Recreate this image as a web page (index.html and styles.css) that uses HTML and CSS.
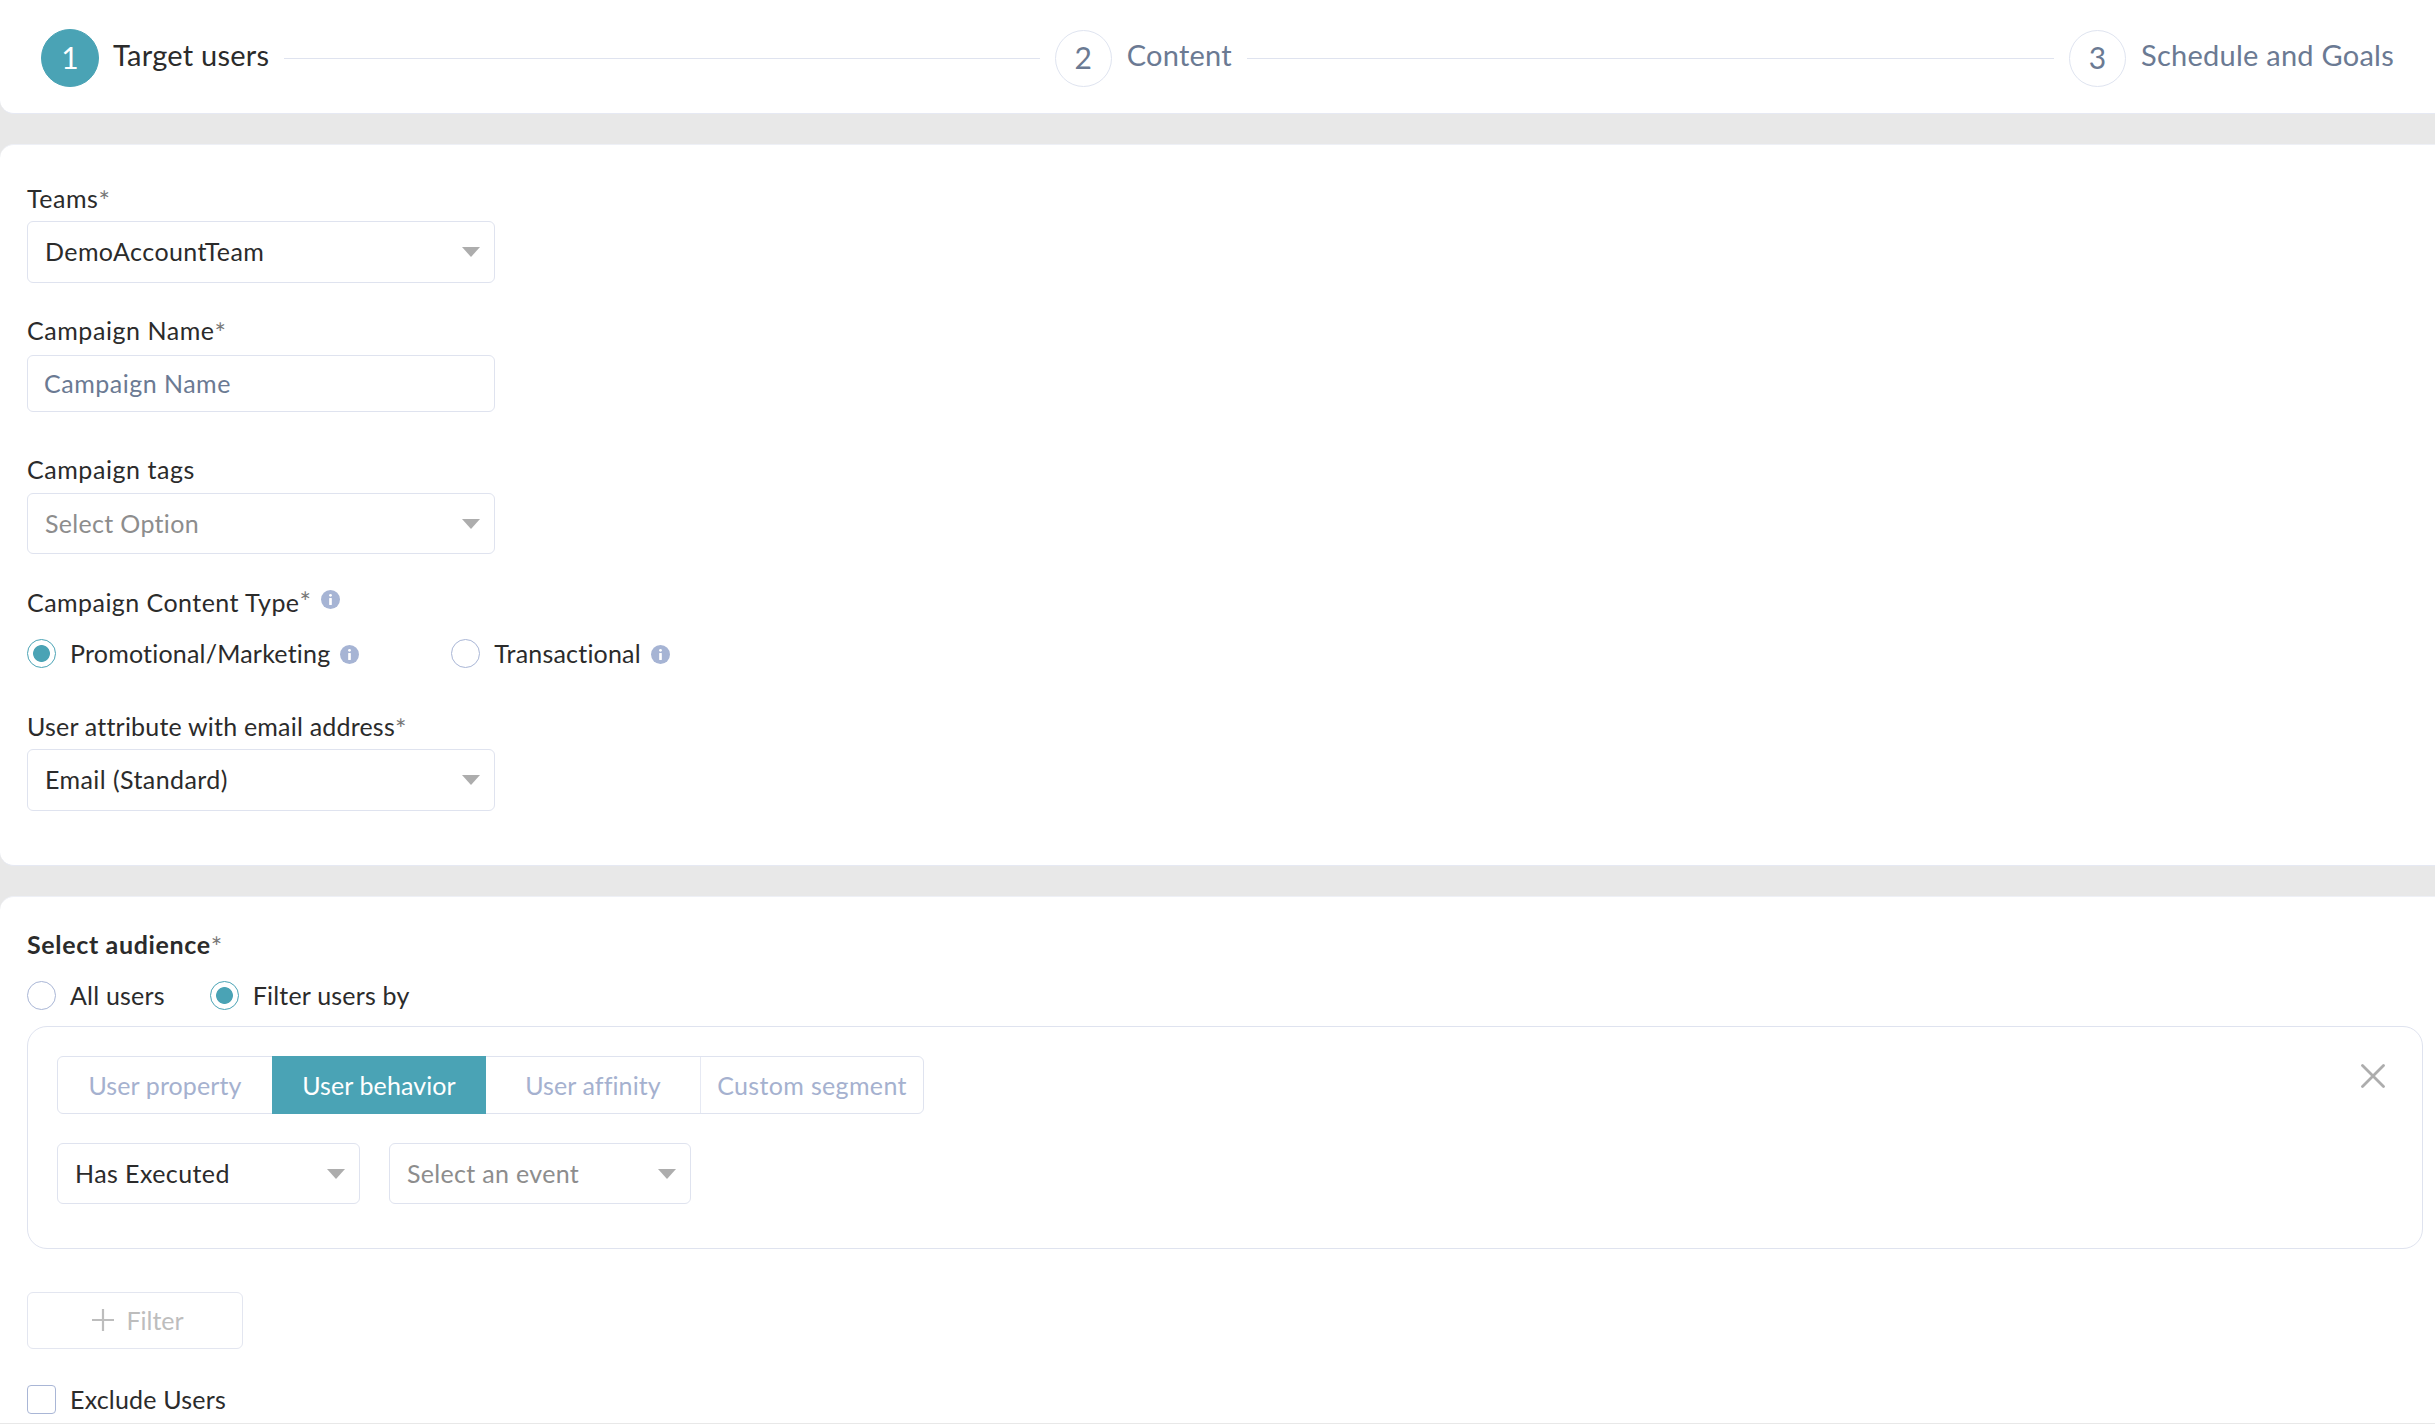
FILE: index.html
```html
<!DOCTYPE html>
<html lang="en">
<head>
<meta charset="utf-8">
<title>Campaign</title>
<link rel="stylesheet" href="styles.css">
</head>
<body>
<header class="card stepper">
  <span class="step-num step-num-active">1</span>
  <span class="step-label step-label-active">Target users</span>
  <span class="step-line step-line-a"></span>
  <span class="step-num">2</span>
  <span class="step-label">Content</span>
  <span class="step-line step-line-b"></span>
  <span class="step-num">3</span>
  <span class="step-label">Schedule and Goals</span>
</header>

<section class="card details">
  <label class="label label-teams">Teams<span class="req">*</span></label>
  <div class="select select-wide"><span class="value">DemoAccountTeam</span><i class="caret"></i></div>

  <label class="label label-name">Campaign Name<span class="req">*</span></label>
  <div class="input"><span class="placeholder">Campaign Name</span></div>

  <label class="label label-tags">Campaign tags</label>
  <div class="select select-wide select-short"><span class="muted">Select Option</span><i class="caret"></i></div>

  <div class="label label-type">Campaign Content Type<span class="req">*</span>
    <svg class="info info-up" viewBox="0 0 20 20"><circle cx="10" cy="10" r="10" fill="#a6b4d4"/><circle cx="10" cy="5.6" r="1.5" fill="#fff"/><rect x="8.6" y="8.4" width="2.8" height="7.4" rx=".6" fill="#fff"/></svg>
  </div>
  <div class="radio-row type-row">
    <span class="radio radio-on"></span><span class="radio-text">Promotional/Marketing</span>
    <svg class="info" viewBox="0 0 20 20"><circle cx="10" cy="10" r="10" fill="#a6b4d4"/><circle cx="10" cy="5.6" r="1.5" fill="#fff"/><rect x="8.6" y="8.4" width="2.8" height="7.4" rx=".6" fill="#fff"/></svg>
    <span class="radio radio-second"></span><span class="radio-text">Transactional</span>
    <svg class="info" viewBox="0 0 20 20"><circle cx="10" cy="10" r="10" fill="#a6b4d4"/><circle cx="10" cy="5.6" r="1.5" fill="#fff"/><rect x="8.6" y="8.4" width="2.8" height="7.4" rx=".6" fill="#fff"/></svg>
  </div>

  <label class="label label-attr">User attribute with email address<span class="req">*</span></label>
  <div class="select select-wide"><span class="value">Email (Standard)</span><i class="caret"></i></div>
</section>

<section class="card audience">
  <div class="label label-audience"><b class="strong">Select audience</b><span class="req">*</span></div>
  <div class="radio-row audience-row">
    <span class="radio"></span><span class="radio-text">All users</span>
    <span class="radio radio-on radio-filter"></span><span class="radio-text">Filter users by</span>
  </div>
  <div class="panel">
    <svg class="close" viewBox="0 0 24 24"><path d="M1.5 1.5 22.5 22.5M22.5 1.5 1.5 22.5" stroke="#adadad" stroke-width="2.8" fill="none" stroke-linecap="round"/></svg>
    <div class="tabs">
      <span class="tab tab-a">User property</span>
      <span class="tab tab-a tab-active">User behavior</span>
      <span class="tab tab-a">User affinity</span>
      <span class="tab tab-last">Custom segment</span>
    </div>
    <div class="panel-selects">
      <div class="select select-narrow select-first"><span class="value">Has Executed</span><i class="caret"></i></div>
      <div class="select select-narrow"><span class="muted">Select an event</span><i class="caret"></i></div>
    </div>
  </div>
  <div class="add-filter">
    <svg class="plus" viewBox="0 0 22 22"><path d="M11 0V22M0 11H22" stroke="#bdbdbd" stroke-width="2.2" fill="none"/></svg>
    <span>Filter</span>
  </div>
  <div class="radio-row exclude-row">
    <span class="checkbox"></span><span class="radio-text">Exclude Users</span>
  </div>
</section>
</body>
</html>
```

FILE: styles.css
```css
* { box-sizing: border-box; }
html, body { margin: 0; height: 1424px; overflow: hidden; }
body { background: #e8e8e8; font-family: "Lato", "Liberation Sans", sans-serif; font-size: 25px; color: #2b2b2b; }
.card { background: #fff; border-radius: 0 0 0 14px; border-bottom: 1px solid #e6e9f3; }
.stepper { height: 114px; display: flex; align-items: center; padding: 3px 41px 0; }
.step-num { flex: none; width: 57px; height: 57px; border-radius: 50%; border: 1px solid #dfe4f0; color: #6b7a93; font-size: 30px; padding-bottom: 2px; display: flex; align-items: center; justify-content: center; margin-right: 15px; }
.step-num-active { width: 58px; height: 58px; margin-right: 14px; background: #4aa3b5; border-color: #4aa3b5; color: #fff; }
.step-label { flex: none; font-size: 29px; letter-spacing: .25px; color: #6b7a93; margin-top: -7px; }
.step-label-active { color: #2b2b2b; }
.step-line { height: 1px; background: #dfe3ef; margin: 0 15px; }
.step-line-a { flex: 757; }
.step-line-b { flex: 809; }
.details { margin-top: 30px; height: 722px; padding: 36px 0 0 27px; border-radius: 14px 0 0 14px; border-top: 1px solid #eef0f6; }
.audience { margin-top: 30px; height: 527px; padding: 30px 0 0 27px; border-radius: 14px 0 0 0; border-top: 1px solid #eef0f6; border-bottom: 0; }
.label { display: block; line-height: 34px; height: 36px; letter-spacing: .55px; }
.req { color: #777; font-size: 27px; line-height: 20px; letter-spacing: 0; vertical-align: -3px; }
.strong { font-weight: 700; letter-spacing: .65px; }
.select { height: 62px; border: 1px solid #dfe3ef; border-radius: 6px; display: flex; align-items: center; justify-content: space-between; padding: 0 14px 0 17px; background: #fff; }
.select-wide { width: 468px; }
.select-short { height: 61px; }
.select-narrow { width: 302px; height: 61px; }
.select-first { width: 303px; }
.input { width: 468px; height: 57px; border: 1px solid #dfe3ef; border-radius: 6px; display: flex; align-items: center; padding: 0 0 2px 16px; }
.value { color: #2b2b2b; letter-spacing: .42px; margin-top: -2px; }
.muted { color: #8d8d8d; letter-spacing: .32px; margin-top: -1px; }
.placeholder { color: #6b7a93; letter-spacing: .5px; }
.caret { width: 0; height: 0; border-left: 9px solid transparent; border-right: 9px solid transparent; border-top: 10px solid #adadad; }
.label-teams { margin-bottom: 4px; }
.label-name { margin-top: 30px; margin-bottom: 6px; }
.label-tags { margin-top: 40px; margin-bottom: 5px; }
.label-type { margin-top: 30px; margin-bottom: 1px; display: flex; align-items: center; letter-spacing: .45px; }
.info { flex: none; width: 19px; height: 19px; margin-left: 10px; margin-top: 1px; }
.info-up { margin-top: -6px; margin-left: 10px; }
.radio-row { display: flex; align-items: center; height: 29px; }
.type-row { margin-top: 19px; }
.radio, .checkbox { flex: none; width: 29px; height: 29px; border: 1px solid #a9b6d6; border-radius: 50%; margin-right: 14px; background: #fff; }
.checkbox { border-radius: 4px; }
.radio-on { border-color: #4aa3b5; background: radial-gradient(circle, #4aa3b5 0 8px, transparent 8.8px); }
.radio-second { margin-left: 92px; }
.radio-text { letter-spacing: .2px; margin-top: -2px; }
.label-attr { margin-top: 41px; margin-bottom: 4px; letter-spacing: .2px; }
.audience-row { margin-top: 18px; }
.radio-filter { margin-left: 45px; }
.panel { position: relative; width: 2396px; height: 223px; margin-top: 16px; border: 1px solid #dfe3ef; border-radius: 20px; padding: 29px 0 0 29px; }
.close { position: absolute; top: 37px; right: 37px; width: 24px; height: 24px; }
.tabs { display: inline-flex; height: 58px; border: 1px solid #dfe3ef; border-radius: 6px; }
.tab { display: flex; align-items: center; justify-content: center; color: #a5b1cf; letter-spacing: .1px; }
.tab-a { width: 214px; margin-top: -1px; margin-bottom: -1px; }
.tab-last { width: 223px; border-left: 1px solid #e6e9f3; letter-spacing: .35px; }
.tab-active { background: #4aa3b5; color: #fff; }
.panel-selects { display: flex; gap: 29px; margin-top: 29px; }
.add-filter { width: 216px; height: 57px; margin-top: 43px; padding: 0 0 2px 6px; border: 1px solid #e3e6f0; border-radius: 6px; display: flex; align-items: center; justify-content: center; gap: 12px; color: #bdbdbd; }
.plus { width: 22px; height: 22px; }
.exclude-row { margin-top: 36px; }
```
